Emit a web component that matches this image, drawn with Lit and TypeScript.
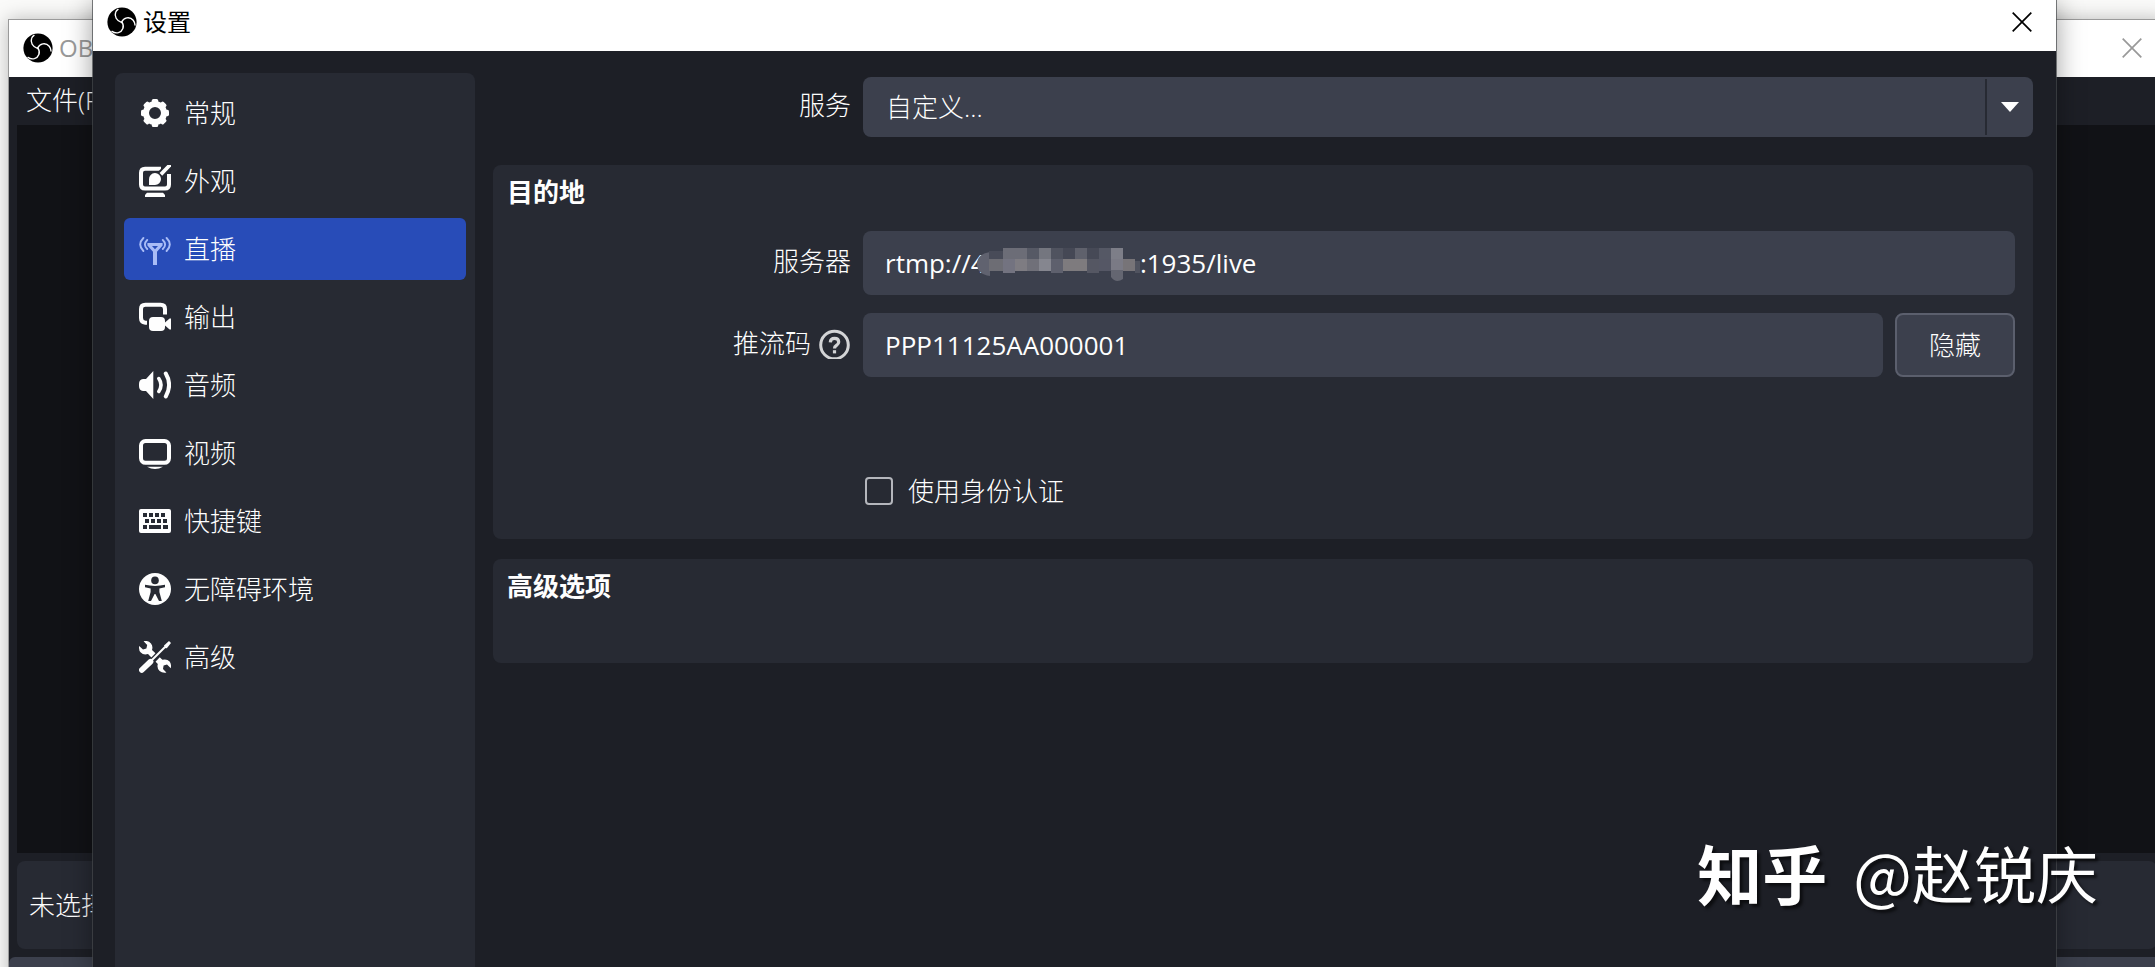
import { LitElement, html, svg, css } from "lit";
import { customElement, property, state } from "lit/decorators.js";
import { classMap } from "lit/directives/class-map.js";

const obsLogo = html`<svg class="logo" viewBox="0 0 30 30" aria-hidden="true">
  <circle cx="15" cy="15" r="14.6" fill="#000" />
  <g fill="none" stroke="#fff" stroke-width="1.4" stroke-linecap="round">
    <path d="M14.8 15.6C9.4 14 7.2 9 8.6 5.4Q9.2 3.6 11 2.4" />
    <path d="M14.8 14.8C16.6 10.6 22.6 9 26.2 13.2Q27.8 15.2 28 18" />
    <path d="M14.8 14.8C18 19.4 15.6 24.4 11.4 25.6Q8 26.4 5 24.4" />
  </g>
</svg>`;

const closeCross = html`<svg class="cross" viewBox="0 0 20 20" aria-hidden="true">
  <path d="M.7 .7L19.3 19.3M19.3 .7L.7 19.3" fill="none" stroke="currentColor" stroke-width="1.7" />
</svg>`;

const icons = {
  general: svg`<circle cx="16" cy="16" r="9" fill="none" stroke="currentColor" stroke-width="6"/>
    ${[0, 45, 90, 135, 180, 225, 270, 315].map(
      (a) => svg`<rect x="12.8" y="2" width="6.4" height="5" rx="1.6" fill="currentColor" transform="rotate(${a} 16 16)"/>`
    )}`,
  appearance: svg`<path d="M22 3.7H6Q2 3.7 2 7.7V19.4Q2 23.4 6 23.4H26Q30 23.4 30 19.4V9" fill="none" stroke="currentColor" stroke-width="4"/>
    <path d="M20.4 10.2L32 -1" stroke="#272a33" stroke-width="7"/>
    <path d="M10 20V14.200A6 6 0 1 1 16 20Z" fill="currentColor"/>
    <path d="M20.600 8L28.400 0H32V1.600L23.200 10.800Z" fill="currentColor"/>
    <path d="M8 27.8H24L26 30V32H6V30Z" fill="currentColor"/>`,
  stream: svg`<g fill="none" stroke="currentColor" stroke-width="1.9" stroke-linecap="round">
      <path d="M4.4 5Q-2 11.4 4.4 18M8.2 7Q3.6 11.4 8.2 16"/>
      <path d="M27.6 5Q34 11.4 27.6 18M23.8 7Q28.4 11.4 23.8 16"/></g>
    <path d="M8.4 10H23.6V12.6L18 18.8V32H14V18.8L8.4 12.6ZM13 13L16 16.2L19 13Z" fill="currentColor" fill-rule="evenodd"/>`,
  output: svg`<path d="M8 21.8H6.4Q2 21.2 2 17V8Q2 3.8 6.4 3.8H21.6Q26 3.8 26 8V13.6" fill="none" stroke="currentColor" stroke-width="4"/>
    <rect x="10" y="16" width="16" height="14" rx="4" fill="currentColor"/>
    <path d="M26 21.6L30.6 17.6H32V28.6H30.6L26 24.6Z" fill="currentColor"/>`,
  audio: svg`<path d="M14.3 2V30L7 22H4Q0 21.4 0 17V15Q0 10.600 4 10H7Z" fill="currentColor"/>
    <g fill="none" stroke="currentColor" stroke-linecap="round"><path d="M19.800 9.600Q24.200 16 19.800 22.400" stroke-width="3.600"/>
    <path d="M26.800 4.600Q33.400 16 26.800 27.400" stroke-width="4"/></g>`,
  video: svg`<rect x="2" y="4" width="28" height="21.800" rx="4.500" fill="none" stroke="currentColor" stroke-width="4"/>
    <path d="M8 29.800H24Q20 32 16 32T8 29.800Z" fill="currentColor"/>`,
  hotkeys: svg`<path fill="currentColor" fill-rule="evenodd" d="M2 4H30Q32 4 32 6V26Q32 28 30 28H2Q0 28 0 26V6Q0 4 2 4Z
    M4 8v4h4v-4ZM10 8v4h4v-4ZM16 8v4h4v-4ZM22 8v4h4v-4ZM6 14v4h4v-4ZM12 14v4h4v-4ZM18 14v4h4v-4ZM24 14v4h4v-4ZM4 20v4h4v-4ZM10 20v4h12v-4ZM24 20v4h5v-4Z"/>`,
  accessibility: svg`<circle cx="16" cy="16" r="16" fill="currentColor"/>
    <circle cx="16" cy="7.400" r="3.800" fill="#272a33"/>
    <path fill="#272a33" d="M6 11.800Q16 14 26 11.800V14.200L20.400 15.600V19L22.800 28H20L16.400 21H15.600L12 28H9.200L11.600 19V15.600L6 14.200Z"/>`,
  advanced: svg`<g fill="currentColor">
    <path d="M4.600 .2Q9 -1 12 2.600Q14.200 5.400 13 9L23.400 18.800Q28 17.600 30.600 20.600Q32.600 23.200 31.800 27.200L28 23.600L24.600 24.400L24 28L27.400 31.600Q23.400 32.400 20.600 30Q17.600 27.200 18.800 23L9 13Q4.600 14.400 1.800 11.600Q-.6 9 .2 5L4 8.600L7.400 7.600L8.200 4Z"/>
    <path d="M9.400 24L24.200 8.200" stroke="#272a33" stroke-width="6"/>
    <path d="M12 20L26 6" stroke="currentColor" stroke-width="2"/>
    <path d="M25 4.400L30 0L32 2L27.800 7.200L25.600 7Z"/>
    <path d="M2.800 29L11.600 20.600" stroke="currentColor" stroke-width="5.600" stroke-linecap="round"/></g>`,
};

type IconName = keyof typeof icons;

@customElement("settings-nav")
class SettingsNav extends LitElement {
  @property() selected: IconName = "stream";

  static items: [IconName, string][] = [
    ["general", "常规"],
    ["appearance", "外观"],
    ["stream", "直播"],
    ["output", "输出"],
    ["audio", "音频"],
    ["video", "视频"],
    ["hotkeys", "快捷键"],
    ["accessibility", "无障碍环境"],
    ["advanced", "高级"],
  ];

  static styles = css`
    :host {
      display: block;
      box-sizing: border-box;
      padding: 9px;
      background: #272a33;
      border-radius: 8px 8px 0 0;
    }
    .list {
      display: flex;
      flex-direction: column;
      gap: 6px;
    }
    .item {
      display: flex;
      align-items: center;
      gap: 13px;
      height: 62px;
      padding: 0 15px;
      border: 0;
      border-radius: 6px;
      background: none;
      color: #fefefe;
      font: inherit;
      text-align: left;
    }
    .item.on {
      background: #284cb8;
    }
    .item.on .icon {
      color: #a9bcf6;
    }
    .icon {
      flex: none;
      width: 32px;
      height: 32px;
    }
  `;

  render() {
    return html`<nav class="list">
      ${SettingsNav.items.map(
        ([id, label]) => html`<button
          type="button"
          class=${classMap({ item: true, on: id === this.selected })}
          @click=${() => (this.selected = id)}
        >
          <svg class="icon" viewBox="0 0 32 32" aria-hidden="true">${icons[id]}</svg>
          <span>${label}</span>
        </button>`
      )}
    </nav>`;
  }
}

/* Mosaic cells: x, y, width, height, colour */
const mosaic: [number, number, number, number, string][] = [
  [12, 3, 14, 9, "#484b58"],
  [26, 0, 24, 12, "#6c6d77"],
  [50, 0, 12, 12, "#565965"],
  [62, 0, 12, 12, "#74767f"],
  [74, 0, 12, 12, "#50535f"],
  [86, 0, 12, 12, "#454855"],
  [98, 0, 12, 12, "#5f616c"],
  [110, 0, 12, 12, "#464956"],
  [122, 0, 12, 12, "#555865"],
  [134, 0, 12, 12, "#7d7e88"],
  [12, 11, 14, 12, "#6d6d74"],
  [26, 11, 12, 14, "#737380"],
  [38, 11, 12, 12, "#7e7c82"],
  [50, 11, 12, 12, "#707079"],
  [62, 11, 12, 12, "#85868f"],
  [74, 11, 12, 14, "#5e606d"],
  [86, 11, 24, 12, "#7e7b7e"],
  [110, 11, 12, 14, "#555763"],
  [122, 11, 12, 12, "#555765"],
  [134, 11, 12, 12, "#7a7a85"],
  [146, 11, 12, 12, "#777478"],
  [158, 13, 5, 12, "#50535f"],
];

@customElement("stream-page")
class StreamPage extends LitElement {
  @state() private keyVisible = true;

  static styles = css`
    :host {
      display: flex;
      flex-direction: column;
      gap: 20px;
    }
    .row {
      display: grid;
      grid-template-columns: 358px minmax(0, 1fr);
      column-gap: 12px;
      align-items: center;
    }
    .service {
      margin-bottom: 8px;
    }
    .label {
      display: flex;
      justify-content: flex-end;
      align-items: center;
      gap: 8px;
      padding-bottom: 4px;
    }
    .group {
      box-sizing: border-box;
      min-height: 104px;
      margin: 0;
      padding: 8px 18px 16px 0;
      border-radius: 8px;
      background: #272a33;
    }
    .heading {
      margin: 0;
      padding-left: 14px;
      font-size: 26px;
      line-height: 38px;
      font-weight: 700;
    }
    .fields {
      display: flex;
      flex-direction: column;
      gap: 18px;
      padding-top: 20px;
    }
    .text,
    .select,
    .toggle {
      box-sizing: border-box;
      width: 100%;
      border: 0;
      border-radius: 8px;
      background: #3c404d;
      color: #fefefe;
      font: inherit;
      outline: none;
    }
    .text {
      height: 64px;
      padding: 0 22px;
      font-family: "Open Sans", "Noto Sans CJK SC", sans-serif;
      font-weight: 400;
    }
    .select {
      display: block;
      height: 60px;
      padding: 0 64px 0 23px;
      appearance: none;
    }
    .box {
      position: relative;
    }
    .drop {
      position: absolute;
      inset: 2px 0 2px auto;
      width: 46px;
      border-left: 2px solid #272a33;
      display: grid;
      place-items: center;
      pointer-events: none;
    }
    .arrow {
      width: 18px;
      height: 10px;
    }
    .mosaic {
      position: absolute;
      left: 114px;
      top: 17px;
      width: 164px;
      height: 34px;
      pointer-events: none;
    }
    .pair {
      display: grid;
      grid-template-columns: minmax(0, 1fr) 120px;
      gap: 12px;
    }
    .toggle {
      border: 2px solid #5b5f6d;
    }
    .help {
      width: 32px;
      height: 32px;
    }
    .auth {
      padding-top: 64px;
    }
    .check {
      grid-column: 2;
      display: flex;
      align-items: center;
      gap: 15px;
      height: 64px;
      padding-left: 2px;
    }
    .tick {
      appearance: none;
      box-sizing: border-box;
      width: 28px;
      height: 28px;
      margin: 0;
      border: 2px solid #b4b6bc;
      border-radius: 4px;
    }
  `;

  render() {
    return html`
      <div class="row service">
        <label class="label" for="service">服务</label>
        <div class="box">
          <select class="select" id="service">
            <option>自定义...</option>
          </select>
          <span class="drop">
            <svg class="arrow" viewBox="0 0 18 10" aria-hidden="true"><path d="M0 0H18L9 10Z" fill="#fff" /></svg>
          </span>
        </div>
      </div>
      <section class="group">
        <h2 class="heading">目的地</h2>
        <div class="fields">
          <div class="row">
            <label class="label" for="server">服务器</label>
            <div class="box">
              <input class="text" id="server" .value=${"rtmp://4×.×××.×××.××:1935/live"} />
              <svg class="mosaic" viewBox="0 0 164 34" aria-hidden="true">
                <rect x="6" y="2" width="156" height="28" fill="#3c404d" />
                <path d="M13 4Q0 6 0 16T13 28Z" fill="#60626f" />
                ${mosaic.map(([x, y, w, h, c]) => svg`<rect x=${x} y=${y} width=${w} height=${h} fill=${c} />`)}
                <path d="M134 22H146V31Q139 36 134 29Z" fill="#646671" />
              </svg>
            </div>
          </div>
          <div class="row">
            <div class="label">
              <label for="key">推流码</label>
              <svg class="help" viewBox="0 0 32 32" aria-hidden="true">
                <circle cx="15.500" cy="18" r="13.800" fill="none" stroke="#d3d4d6" stroke-width="3" />
                <path
                  d="M11.300 15.400Q11.500 11.400 15.500 11.400Q19.700 11.400 19.700 15Q19.700 16.800 17.700 18.200Q15.500 19.600 15.500 21.600"
                  fill="none"
                  stroke="#d3d4d6"
                  stroke-width="3.200"
                />
                <rect x="13.900" y="23.200" width="3.200" height="3.200" fill="#d3d4d6" />
              </svg>
            </div>
            <div class="pair">
              <input
                class="text"
                id="key"
                type=${this.keyVisible ? "text" : "password"}
                .value=${"PPP11125AA000001"}
              />
              <button type="button" class="toggle" @click=${() => (this.keyVisible = !this.keyVisible)}>
                ${this.keyVisible ? "隐藏" : "显示"}
              </button>
            </div>
          </div>
          <div class="row auth">
            <label class="check"><input class="tick" type="checkbox" />使用身份认证</label>
          </div>
        </div>
      </section>
      <section class="group">
        <h2 class="heading">高级选项</h2>
      </section>
    `;
  }
}

@customElement("app-root")
class AppRoot extends LitElement {
  static styles = css`
    :host {
      display: block;
      position: relative;
      height: 100vh;
      overflow: hidden;
      background: #fafaf9;
      color: #fefefe;
      font-family: "Open Sans", "Noto Sans CJK SC", sans-serif;
      font-size: 26px;
      line-height: 36px;
      font-weight: 300;
    }
    .window {
      position: absolute;
      display: flex;
      flex-direction: column;
      box-sizing: border-box;
      background: #1d1f26;
    }
    .main {
      inset: 19px -11px -40px 8px;
      border: 1px solid #9a9a9a;
      box-shadow: 0 0 18px rgba(0, 0, 0, 0.25);
    }
    .dialog {
      inset: 0 99px 0 93px;
      box-shadow:
        0 0 0 1px rgba(70, 72, 76, 0.7),
        0 4px 26px rgba(0, 0, 0, 0.4);
    }
    .bar {
      display: flex;
      align-items: center;
      flex: none;
      gap: 6px;
      box-sizing: border-box;
      background: #fff;
      color: #000;
      font-size: 24px;
      font-weight: 400;
    }
    .main .bar {
      height: 57px;
      padding: 0 23px 2px 14px;
      color: #999;
    }
    .dialog .bar {
      height: 51px;
      padding: 0 24px 8px 14px;
    }
    .logo {
      width: 30px;
      height: 30px;
    }
    .close {
      display: grid;
      place-items: center;
      margin-left: auto;
      padding: 0;
      border: 0;
      background: none;
      color: inherit;
    }
    .cross {
      width: 20px;
      height: 20px;
    }
    .menu {
      flex: none;
      height: 48px;
      padding: 0 17px;
      line-height: 46px;
    }
    .preview {
      flex: 1;
      margin: 0 8px;
      background: #111216;
    }
    .source {
      flex: none;
      margin: 8px;
      padding: 0 12px;
      border-radius: 8px;
      background: #272a33;
      line-height: 88px;
    }
    .dock {
      flex: none;
      height: 49px;
      border-radius: 6px 6px 0 0;
      background: #3c404d;
    }
    .body {
      flex: 1;
      display: grid;
      grid-template-columns: 360px minmax(0, 1fr);
      gap: 18px;
      padding: 22px 23px 0 22px;
    }
    .page {
      padding-top: 4px;
    }
    .mark {
      position: absolute;
      right: 57px;
      bottom: 50px;
      display: flex;
      align-items: center;
      gap: 26px;
      color: #fff;
      font-family: "Noto Sans CJK SC", sans-serif;
      font-size: 62px;
      line-height: 90px;
      font-weight: 400;
      text-shadow: 3px 3px 3px rgba(0, 0, 0, 0.6);
    }
    .brand {
      font-size: 65px;
      font-weight: 700;
    }
  `;

  render() {
    return html`
      <div class="window main">
        <header class="bar">
          ${obsLogo}<span>OBS</span>
          <button type="button" class="close" aria-label="关闭">${closeCross}</button>
        </header>
        <div class="menu">文件(F)</div>
        <div class="preview"></div>
        <div class="source">未选择</div>
        <div class="dock"></div>
      </div>
      <div class="window dialog">
        <header class="bar">
          ${obsLogo}<span>设置</span>
          <button type="button" class="close" aria-label="关闭">${closeCross}</button>
        </header>
        <div class="body">
          <settings-nav></settings-nav>
          <stream-page class="page"></stream-page>
        </div>
      </div>
      <div class="mark"><span class="brand">知乎</span><span>@赵锐庆</span></div>
    `;
  }
}
